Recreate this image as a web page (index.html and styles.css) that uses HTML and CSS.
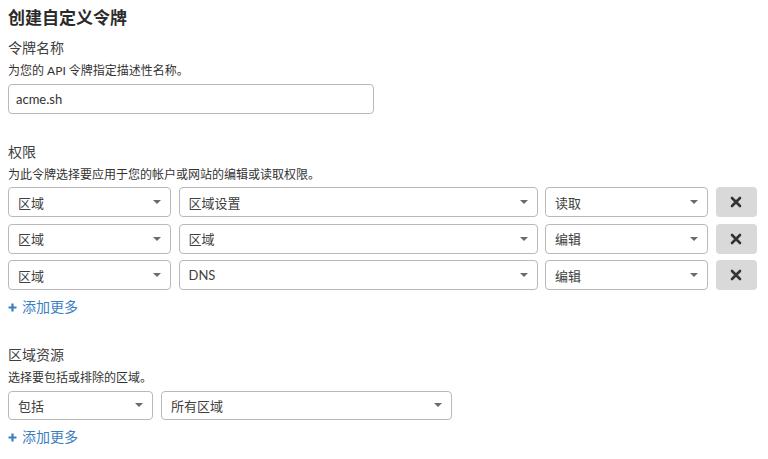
FILE: index.html
```html
<!DOCTYPE html>
<html lang="zh-CN">

<head>
    <meta charset="UTF-8">
    <meta name="viewport" content="width=device-width, initial-scale=1.0">
    <title>创建自定义令牌</title>
    <link rel="stylesheet" href="styles.css">
</head>

<body>
    <div id="page">
        <h1 class="title">创建自定义令牌</h1>

        <div class="section first">
            <div class="label">令牌名称</div>
            <div class="hint">为您的 API 令牌指定描述性名称。</div>
            <div class="input">acme.sh</div>
        </div>

        <div class="section">
            <div class="label">权限</div>
            <div class="hint">为此令牌选择要应用于您的帐户或网站的编辑或读取权限。</div>
            <div class="rows">
                <div class="permRow">
                    <div class="select"><span>区域</span><i class="arrow"></i></div>
                    <div class="select"><span>区域设置</span><i class="arrow"></i></div>
                    <div class="select"><span>读取</span><i class="arrow"></i></div>
                    <button class="remove"><svg width="12" height="12" viewBox="0 0 12 12"><path d="M2 2 L10 10 M10 2 L2 10" stroke="#333" stroke-width="2.6" stroke-linecap="round"/></svg></button>
                </div>
                <div class="permRow">
                    <div class="select"><span>区域</span><i class="arrow"></i></div>
                    <div class="select"><span>区域</span><i class="arrow"></i></div>
                    <div class="select"><span>编辑</span><i class="arrow"></i></div>
                    <button class="remove"><svg width="12" height="12" viewBox="0 0 12 12"><path d="M2 2 L10 10 M10 2 L2 10" stroke="#333" stroke-width="2.6" stroke-linecap="round"/></svg></button>
                </div>
                <div class="permRow">
                    <div class="select"><span>区域</span><i class="arrow"></i></div>
                    <div class="select"><span>DNS</span><i class="arrow"></i></div>
                    <div class="select"><span>编辑</span><i class="arrow"></i></div>
                    <button class="remove"><svg width="12" height="12" viewBox="0 0 12 12"><path d="M2 2 L10 10 M10 2 L2 10" stroke="#333" stroke-width="2.6" stroke-linecap="round"/></svg></button>
                </div>
            </div>
            <a class="addMore" href="#"><svg class="plus" width="9" height="9" viewBox="0 0 9 9"><path d="M4.5 0.5 V8.5 M0.5 4.5 H8.5" stroke="#3b7fc0" stroke-width="2.2"/></svg>添加更多</a>
        </div>

        <div class="section">
            <div class="label">区域资源</div>
            <div class="hint">选择要包括或排除的区域。</div>
            <div class="zoneRow">
                <div class="select"><span>包括</span><i class="arrow"></i></div>
                <div class="select"><span>所有区域</span><i class="arrow"></i></div>
            </div>
            <a class="addMore" href="#"><svg class="plus" width="9" height="9" viewBox="0 0 9 9"><path d="M4.5 0.5 V8.5 M0.5 4.5 H8.5" stroke="#3b7fc0" stroke-width="2.2"/></svg>添加更多</a>
        </div>
    </div>
</body>

</html>
```

FILE: styles.css
```css
body {
    margin: 0;
    background: #fff;
    color: #333;
    font-family: "Segoe UI", "Lato", "Noto Sans CJK SC", sans-serif;
}

#page {
    padding: 6px 8px;
}

.title {
    margin: 0;
    font-size: 17px;
    line-height: 24px;
    font-weight: bold;
    color: #2b2b2b;
}

.section {
    margin-top: 28px;
}

.section.first {
    margin-top: 8px;
}

.label {
    font-size: 14px;
    line-height: 20px;
    color: #404040;
}

.hint {
    font-size: 12px;
    line-height: 18px;
    margin-top: 4px;
    margin-bottom: 3.5px;
    color: #333;
}

.input {
    width: 366px;
    height: 30px;
    box-sizing: border-box;
    border: 1px solid #b9b9b9;
    border-radius: 4px;
    padding: 0 7px;
    font-size: 13px;
    line-height: 28px;
    color: #333;
}

.rows {
    display: grid;
    row-gap: 6.5px;
}

.permRow {
    display: grid;
    grid-template-columns: 163px 359px 163px 41px;
    column-gap: 7.5px;
}

.zoneRow {
    display: grid;
    grid-template-columns: 145px 291px;
    column-gap: 8px;
}

.select {
    height: 30px;
    box-sizing: border-box;
    border: 1px solid #b9b9b9;
    border-radius: 4px;
    padding: 0 9px;
    display: flex;
    align-items: center;
    justify-content: space-between;
    font-size: 13px;
    color: #404040;
}

.zoneRow .select {
    height: 29.5px;
}

.arrow {
    width: 0;
    height: 0;
    border-left: 4px solid transparent;
    border-right: 4px solid transparent;
    border-top: 4px solid #6b6b6b;
}

.remove {
    height: 30px;
    border: none;
    border-radius: 4px;
    background: #d9d9d9;
    padding: 0;
    display: flex;
    align-items: center;
    justify-content: center;
}

.addMore {
    display: inline-flex;
    align-items: center;
    margin-top: 7px;
    font-size: 14px;
    line-height: 20px;
    color: #3b7fc0;
    text-decoration: none;
}

.plus {
    margin-right: 5px;
}
```
